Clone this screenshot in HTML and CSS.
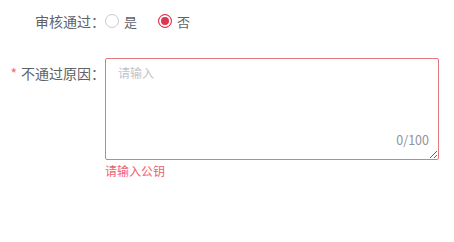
FILE: index.html
```html
<!DOCTYPE html>
<html lang="zh-CN">
<head>
<meta charset="utf-8">
<link rel="stylesheet" href="styles.css">
</head>
<body>
<form class="form">
  <div class="row row-radio">
    <label class="label">审核通过：</label>
    <div class="radios">
      <label class="radio"><span class="dot"></span><span class="radio-text">是</span></label>
      <label class="radio checked"><span class="dot"></span><span class="radio-text">否</span></label>
    </div>
  </div>
  <div class="row row-reason">
    <label class="label required">不通过原因：</label>
    <div class="field">
      <div class="textarea-wrap">
        <textarea class="textarea" placeholder="请输入"></textarea>
        <span class="count">0/100</span>
      </div>
      <div class="error">请输入公钥</div>
    </div>
  </div>
</form>
</body>
</html>
```
FILE: styles.css
```css
html, body {
  margin: 0;
  padding: 0;
  background: #ffffff;
}
body {
  font-family: "Noto Sans CJK SC", "Noto Sans", sans-serif;
  color: #606266;
}
.form {
  display: flex;
  flex-direction: column;
  gap: 16px;
}
.row {
  display: flex;
  align-items: flex-start;
}
.row-radio {
  height: 42px;
  align-items: center;
}
.label {
  width: 105px;
  flex: none;
  text-align: right;
  font-size: 14px;
  line-height: 30px;
  color: #606266;
  white-space: nowrap;
}
.row-radio .label {
  line-height: 20px;
}
.required::before {
  content: "*";
  color: #f56c6c;
  margin-right: 4px;
}
.radios {
  display: flex;
  align-items: center;
  gap: 21px;
}
.radio {
  display: flex;
  align-items: center;
  gap: 5px;
  font-size: 13px;
  color: #606266;
}
.dot {
  box-sizing: border-box;
  width: 14px;
  height: 14px;
  border: 1px solid #c8cbd1;
  border-radius: 50%;
  background: #fff;
}
.checked .dot {
  border: 1.5px solid #df3550;
  background: #df3550;
  box-shadow: inset 0 0 0 2px #fff;
}
.field {
  display: flex;
  flex-direction: column;
}
.textarea-wrap {
  position: relative;
  width: 334px;
  height: 102px;
}
.textarea {
  box-sizing: border-box;
  display: block;
  width: 334px;
  height: 102px;
  margin: 0;
  padding: 4px 12px;
  border: 1px solid #e27880;
  border-radius: 2px;
  font-family: "Noto Sans CJK SC", "Noto Sans", sans-serif;
  font-size: 12px;
  line-height: 20px;
  color: #606266;
  outline: none;
  resize: vertical;
}
.textarea::placeholder {
  color: #c0c4cc;
}
.count {
  position: absolute;
  right: 10px;
  bottom: 12px;
  font-size: 12.5px;
  line-height: 16px;
  color: #909399;
}
.error {
  margin-top: 3px;
  font-size: 12px;
  line-height: 16px;
  color: #f0616c;
}
```
